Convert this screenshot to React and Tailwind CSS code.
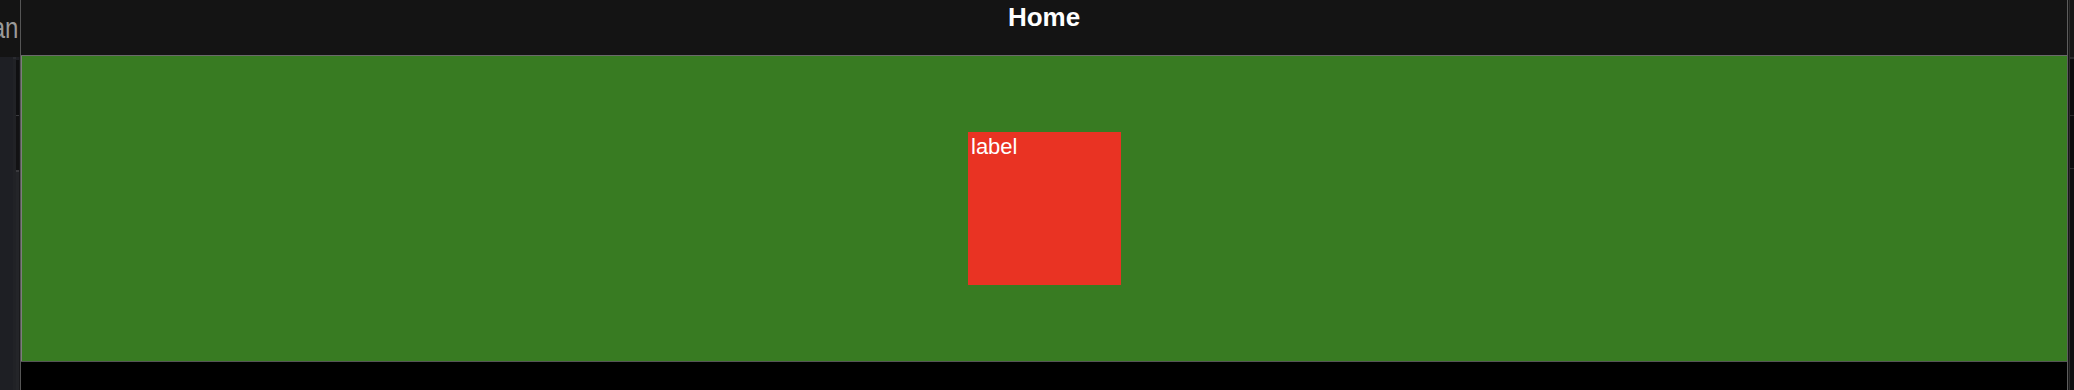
export default function App() {
  return (
    <div className="flex h-[390px] w-[2074px] overflow-hidden bg-black" style={{ fontFamily: '"Liberation Sans", Arial, sans-serif' }}>
      {/* left sliver */}
      <div className="flex w-[20px] flex-col">
        <div className="relative h-[57px] overflow-hidden bg-[#141414]">
          <span className="absolute right-[2px] top-[13px] origin-right scale-x-[0.8] text-[30px] leading-none text-[#9a9a9a] whitespace-nowrap">an</span>
        </div>
        <div className="flex flex-1 bg-[#1e1f24]">
          <div className="w-[13px]" />
          <div className="flex w-[3px] flex-col bg-[#212226]">
            <div className="h-[2px] bg-[#2a2b30]" />
          </div>
          <div className="flex w-[3px] flex-col">
            <div className="mt-[3px] h-[55px] bg-[#0f0f11]" />
            <div className="h-[1px] bg-[#3a3a3e]" />
            <div className="h-[54px] bg-[#121214]" />
            <div className="h-[2px] bg-[#3a3a3e]" />
            <div className="flex-1 bg-[#242529]" />
          </div>
          <div className="w-[1px] bg-[#19191c]" />
        </div>
      </div>
      <div className="w-[1px] bg-[#555555]" />
      {/* main */}
      <div className="flex flex-1 flex-col">
        <div className="flex h-[55px] justify-center bg-[#141414] pt-[3px]">
          <span className="text-[26px] font-bold leading-[28px] text-white">Home</span>
        </div>
        <div className="h-[1px] bg-[#6a6a6a]" />
        <div className="flex h-[305px] items-center justify-center border-l border-[#7d7d7d] bg-[#387b22]">
          <div className="h-[153px] w-[153px] bg-[#e93323] pl-[3px] pt-[2px]">
            <span className="text-[22px] leading-[26px] text-white">label</span>
          </div>
        </div>
        <div className="h-[1px] bg-[#555555]" />
        <div className="flex-1 bg-black" />
      </div>
      <div className="w-[1px] bg-[#5e5e5e]" />
      {/* right sliver */}
      <div className="flex w-[6px]">
        <div className="w-[1px] bg-[#161616]" />
        <div className="w-[1px] bg-[#2e2e2e]" />
        <div className="flex flex-1 flex-col">
          <div className="h-[57px] bg-[#161616]" />
          <div className="h-[2px] bg-[#2a2a2c]" />
          <div className="h-[56px] bg-[#0c0c0e]" />
          <div className="h-[1px] bg-[#2a2a2c]" />
          <div className="h-[52px] bg-[#0c0c0e]" />
          <div className="h-[1px] bg-[#2a2a2c]" />
          <div className="flex-1 bg-[#0e0e10]" />
        </div>
      </div>
    </div>
  );
}
